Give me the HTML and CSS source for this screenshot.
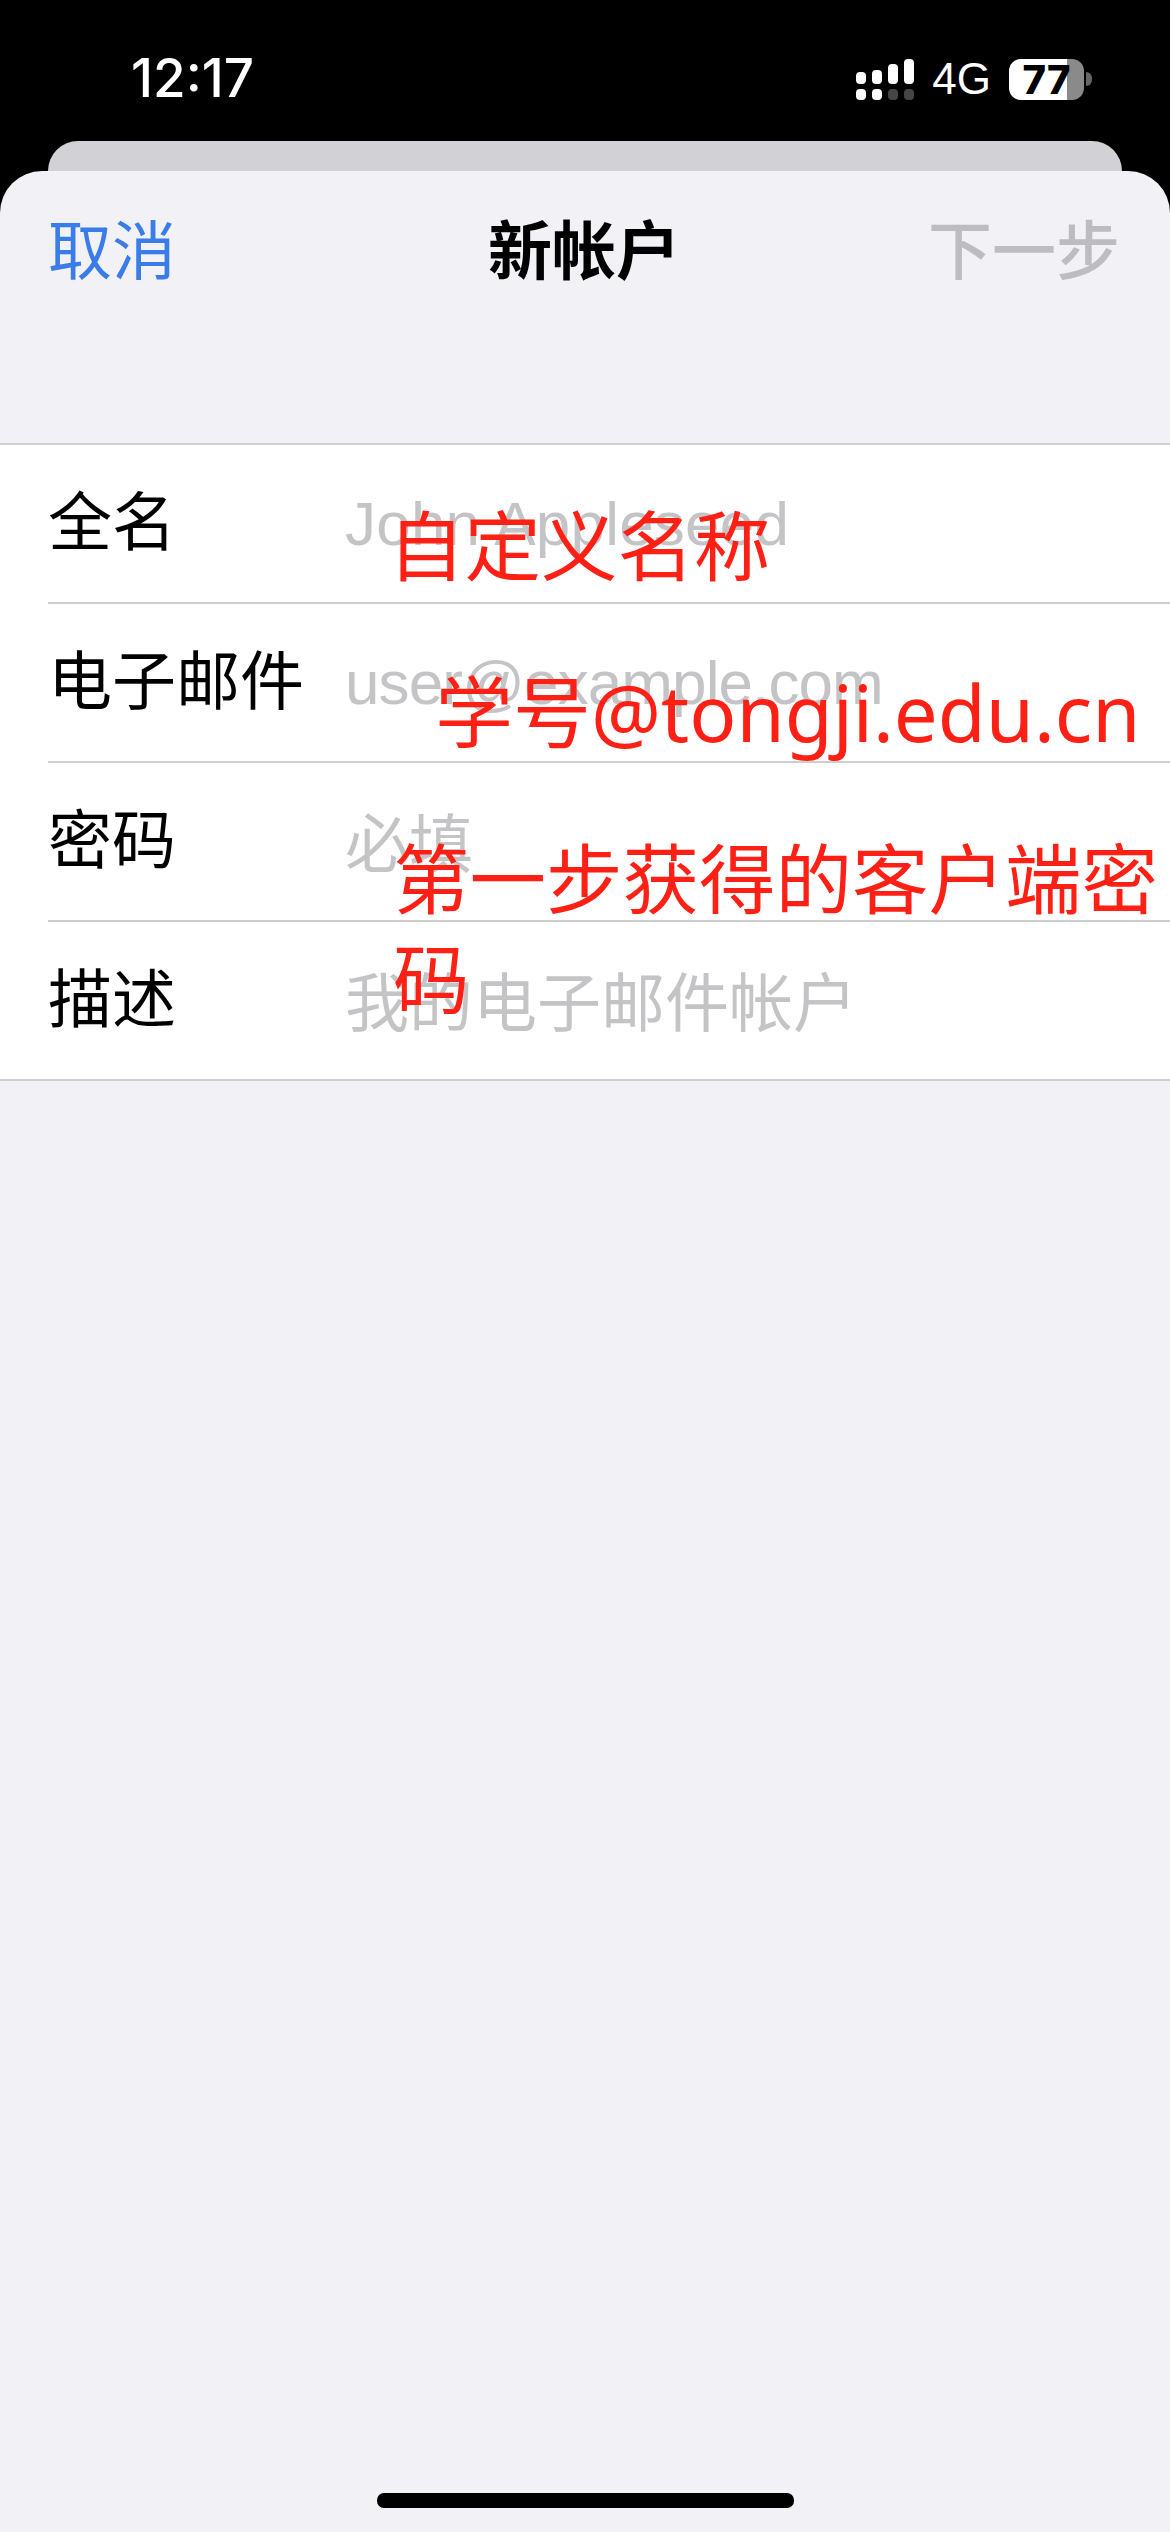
FILE: index.html
```html
<!DOCTYPE html>
<html lang="zh-CN">
<head>
<meta charset="utf-8">
<title>新帐户</title>
<link rel="stylesheet" href="styles.css">
</head>
<body>
<header class="status">
  <span class="time">12:17</span>
  <div class="status-right">
    <svg class="signal" width="58" height="41" viewBox="0 0 58 41">
      <rect x="0" y="13" width="10" height="12" rx="4" fill="#fff"/>
      <rect x="16" y="11" width="10" height="14" rx="4" fill="#fff"/>
      <rect x="32" y="5" width="10" height="20" rx="4" fill="#fff"/>
      <rect x="48" y="0" width="10" height="25" rx="4" fill="#fff"/>
      <rect x="0" y="30" width="10" height="11" rx="4" fill="#fff"/>
      <rect x="16" y="30" width="10" height="11" rx="4" fill="#fff"/>
      <rect x="32" y="30" width="10" height="11" rx="4" fill="#444"/>
      <rect x="48" y="30" width="10" height="11" rx="4" fill="#444"/>
    </svg>
    <span class="net">4G</span>
    <div class="battery">
      <div class="battery-body"><span class="battery-level">77</span></div>
      <span class="battery-nub"></span>
    </div>
  </div>
</header>
<div class="back-sheet"></div>
<main class="sheet">
  <nav class="nav">
    <span class="nav-cancel">取消</span>
    <span class="nav-title">新帐户</span>
    <span class="nav-next">下一步</span>
  </nav>
  <section class="form">
    <div class="row"><span class="label">全名</span><span class="hint latin">John Appleseed</span></div>
    <div class="row"><span class="label">电子邮件</span><span class="hint latin hint-mail">user@example.com</span></div>
    <div class="row"><span class="label">密码</span><span class="hint">必填</span></div>
    <div class="row last"><span class="label">描述</span><span class="hint">我的电子邮件帐户</span></div>
    <span class="note note-name">自定义名称</span>
    <span class="note note-mail">学号@tongji.edu.cn</span>
    <span class="note note-pass">第一步获得的客户端密码</span>
  </section>
  <div class="home-indicator"></div>
</main>
</body>
</html>
```
FILE: styles.css
```css
* { box-sizing: border-box; }
html, body { margin: 0; padding: 0; }
body {
  width: 1170px;
  height: 2532px;
  overflow: hidden;
  background: #000;
  display: flex;
  flex-direction: column;
  font-family: "Noto Sans CJK SC", "Liberation Sans", sans-serif;
}
.status {
  height: 141px;
  flex: none;
  display: flex;
  justify-content: space-between;
  align-items: flex-start;
  padding: 50px 78px 0 131px;
  color: #fff;
}
.time {
  font-family: Inter, sans-serif;
  font-weight: 500;
  font-size: 53px;
  line-height: 56px;
}
.status-right {
  display: flex;
  align-items: center;
  margin-top: 7px;
}
.signal { display: block; margin-right: 18px; }
.net {
  font-family: "Liberation Sans", sans-serif;
  font-size: 44px;
  line-height: 44px;
  margin-right: 18px;
}
.battery { display: flex; align-items: center; }
.battery-body {
  width: 75px;
  height: 41px;
  border-radius: 12px;
  background: linear-gradient(to right, #fff 77%, #8a8a8a 77%);
  display: flex;
  justify-content: center;
}
.battery-level {
  font-family: Inter, sans-serif;
  font-weight: 800;
  font-size: 40px;
  line-height: 41px;
  color: #000;
}
.battery-nub {
  width: 6px;
  height: 14px;
  margin-left: 2px;
  background: #666;
  border-radius: 0 7px 7px 0;
}
.back-sheet {
  flex: none;
  height: 30px;
  margin: 0 48px;
  background: #d1d1d6;
  border-radius: 32px 32px 0 0;
}
.sheet {
  flex: 1;
  display: flex;
  flex-direction: column;
  background: #f1f1f6;
  border-radius: 42px 42px 0 0;
}
.nav {
  height: 272px;
  flex: none;
  display: grid;
  grid-template-columns: 1fr auto 1fr;
  padding: 36px 50px 0 48px;
  font-size: 64px;
  line-height: 78px;
}
.nav-cancel { color: #3a7de8; }
.nav-title { color: #000; font-weight: 700; }
.nav-next { color: #bdbdc0; font-weight: 500; text-align: right; }
.form {
  position: relative;
  background: #fff;
  border-top: 2px solid #cfcfd2;
  border-bottom: 2px solid #cfcfd2;
  padding-left: 48px;
}
.row {
  height: 159px;
  display: flex;
  align-items: center;
  border-bottom: 2px solid #cfcfd2;
}
.row.last { border-bottom: 0; height: 157px; }
.label {
  width: 297px;
  flex: none;
  font-size: 64px;
  color: #000;
  line-height: 80px;
  margin-bottom: 13px;
}
.hint {
  font-size: 64px;
  color: #c4c4c6;
  line-height: 80px;
  margin-bottom: 6px;
}
.hint.latin {
  font-family: "Liberation Sans", sans-serif;
  font-size: 62px;
  margin-bottom: 0;
  letter-spacing: 0.2px;
}
.hint.hint-mail { letter-spacing: -0.9px; }
.note {
  position: absolute;
  color: #ff2015;
  font-size: 76.5px;
  line-height: 100px;
  font-family: "Noto Sans", "Noto Sans CJK SC", sans-serif;
}
.note-name { left: 388px; top: 50px; }
.note-mail { left: 435px; top: 217px; font-size: 78px; }
.note-pass { left: 393px; top: 383px; width: 775px; }
.home-indicator {
  width: 417px;
  height: 15px;
  margin: auto auto 24px;
  background: #000;
  border-radius: 7px;
}
```
